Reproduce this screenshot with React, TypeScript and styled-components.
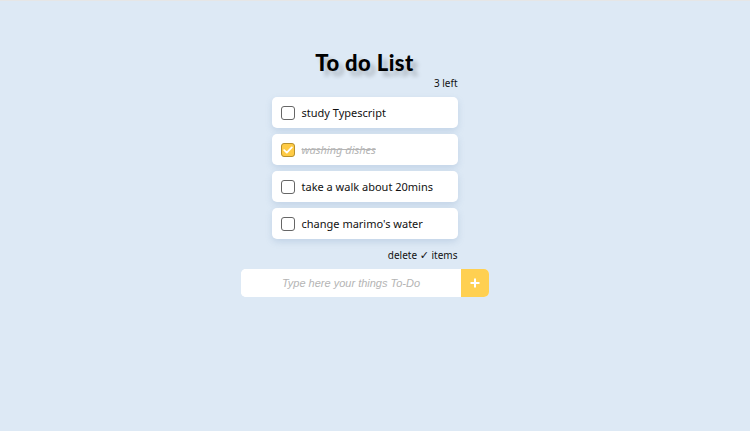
import styled, { createGlobalStyle } from "styled-components";

const GlobalStyle = createGlobalStyle`
  html, body {
    margin: 0;
    padding: 0;
    background: #dde9f5;
  }
  body {
    font-family: "Noto Sans", "Open Sans", sans-serif;
    border-top: 1px solid #e6e6e6;
  }
`;

const Page = styled.div`
  width: 729px;
  height: 430px;
  display: flex;
  flex-direction: column;
  align-items: center;
  padding-top: 48px;
  box-sizing: border-box;
`;

const Title = styled.h1`
  margin: 0;
  font-family: Lato, sans-serif;
  font-weight: 900;
  font-size: 22px;
  letter-spacing: 0.4px;
  color: #000;
  line-height: 28px;
  text-shadow: 5px 5px 4px rgba(0, 0, 0, 0.22);
`;

const Board = styled.div`
  width: 186px;
  display: flex;
  flex-direction: column;
`;

const Meta = styled.div<{ $top?: number }>`
  align-self: flex-end;
  font-size: 10px;
  color: #111;
  line-height: 14px;
  margin-top: ${({ $top }) => $top ?? 0}px;
`;

const Check = styled.span`
  font-family: "DejaVu Sans", sans-serif;
  font-size: 11px;
`;

const List = styled.ul`
  list-style: none;
  margin: 7px 0 0;
  padding: 0;
  display: flex;
  flex-direction: column;
  gap: 6px;
`;

const Item = styled.li`
  height: 31px;
  background: #fff;
  border-radius: 5px;
  box-shadow: 0 3px 6px rgba(120, 150, 190, 0.25);
  display: flex;
  align-items: center;
  padding: 0 9px;
  gap: 7px;
  box-sizing: border-box;
`;

const Box = styled.span<{ $checked?: boolean }>`
  width: 14px;
  height: 14px;
  box-sizing: border-box;
  border-radius: 3px;
  border: 1px solid ${({ $checked }) => ($checked ? "#b8912e" : "#666")};
  background: ${({ $checked }) => ($checked ? "#ffcb45" : "#fff")};
  display: flex;
  align-items: center;
  justify-content: center;
  flex-shrink: 0;
`;

const Label = styled.span<{ $done?: boolean }>`
  font-size: 11px;
  color: ${({ $done }) => ($done ? "#b5b5b5" : "#111")};
  font-style: ${({ $done }) => ($done ? "italic" : "normal")};
  text-decoration: ${({ $done }) => ($done ? "line-through" : "none")};
`;

const Form = styled.form`
  margin-top: 6px;
  margin-left: 1px;
  width: 248px;
  height: 28px;
  display: flex;
  border-radius: 5px;
  overflow: hidden;
  background: #fff;
`;

const Input = styled.input`
  flex: 1;
  border: none;
  outline: none;
  padding: 0;
  text-align: center;
  font-family: "Liberation Sans", Arial, sans-serif;
  font-style: italic;
  font-size: 11px;
  background: #fff;
  &::placeholder {
    color: #b4b4b4;
  }
`;

const AddButton = styled.button`
  width: 28px;
  border: none;
  padding: 0;
  background: #ffd051;
  display: flex;
  align-items: center;
  justify-content: center;
`;

const todos = [
  { text: "study Typescript", done: false },
  { text: "washing dishes", done: true },
  { text: "take a walk about 20mins", done: false },
  { text: "change marimo's water", done: false },
];

export default function App() {
  return (
    <>
      <GlobalStyle />
      <Page>
        <Title>To do List</Title>
        <Board>
          <Meta $top={-1}>3 left</Meta>
          <List>
            {todos.map((t) => (
              <Item key={t.text}>
                <Box $checked={t.done}>
                  {t.done && (
                    <svg width="10" height="8" viewBox="0 0 10 8">
                      <path
                        d="M1.2 4.2 L3.8 6.6 L8.8 1.4"
                        fill="none"
                        stroke="#fff"
                        strokeWidth="1.8"
                        strokeLinecap="round"
                        strokeLinejoin="round"
                      />
                    </svg>
                  )}
                </Box>
                <Label $done={t.done}>{t.text}</Label>
              </Item>
            ))}
          </List>
          <Meta $top={9}>
            delete <Check>✓</Check> items
          </Meta>
        </Board>
        <Form onSubmit={(e) => e.preventDefault()}>
          <Input placeholder="Type here your things To-Do" />
          <AddButton type="submit">
            <svg width="10" height="10" viewBox="0 0 10 10">
              <path d="M5 0.5 V9.5 M0.5 5 H9.5" stroke="#fff" strokeWidth="2" />
            </svg>
          </AddButton>
        </Form>
      </Page>
    </>
  );
}
